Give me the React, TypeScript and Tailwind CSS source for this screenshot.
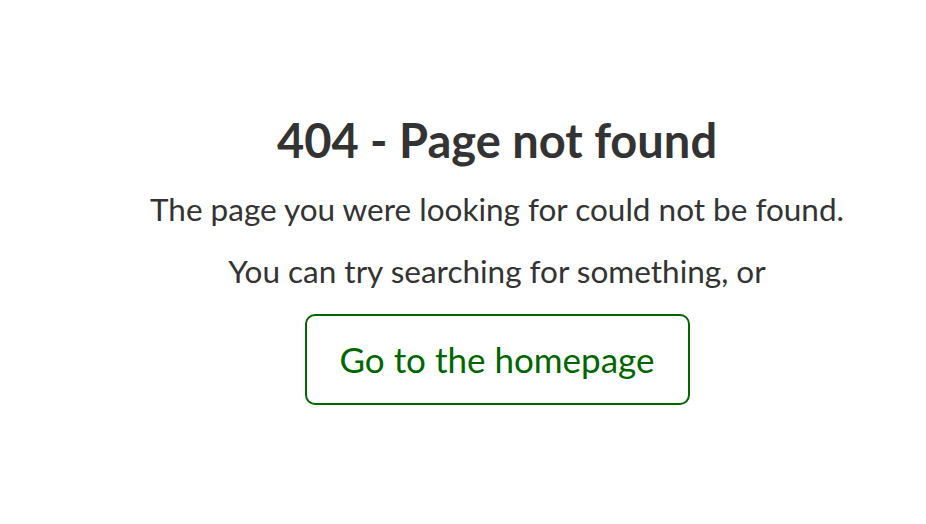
export default function App() {
  return (
    <div className="min-h-screen bg-white font-['Lato',sans-serif] text-[#333333]">
      <div className="flex flex-col items-center pl-[68px] pt-[112px] text-center">
        <h1 className="text-[47px] font-bold leading-[56px]">404 - Page not found</h1>
        <p className="mt-[23px] text-[31.5px] leading-[36px]">The page you were looking for could not be found.</p>
        <p className="mt-[26px] text-[31.5px] leading-[36px]">You can try searching for something, or</p>
        <a
          href="#"
          className="mt-[25px] flex h-[91px] w-[385px] items-center justify-center rounded-[10px] border-2 border-[#006600] text-[35px] text-[#006600]"
        >
          Go to the homepage
        </a>
      </div>
    </div>
  );
}
